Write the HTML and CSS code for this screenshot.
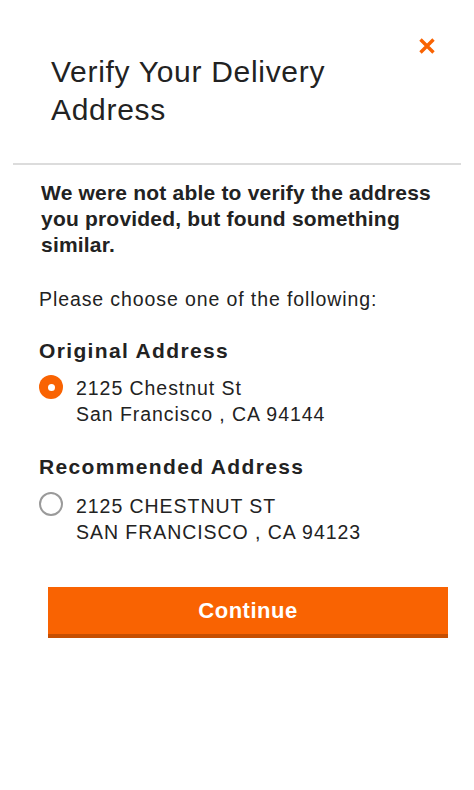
FILE: index.html
```html
<!DOCTYPE html>
<html>
<head>
<meta charset="utf-8">
<link rel="stylesheet" href="styles.css">
</head>
<body>
<div class="modal">
  <header class="head">
    <h1 class="title">Verify Your Delivery Address</h1>
    <button class="close" aria-label="Close">
      <svg width="18" height="18" viewBox="0 0 18 18"><path d="M2.5 2.5 L15.5 15.5 M15.5 2.5 L2.5 15.5" stroke="#f96302" stroke-width="3.4" stroke-linecap="butt"/></svg>
    </button>
  </header>
  <div class="divider"></div>
  <section class="content">
    <p class="warn">We were not able to verify the address you provided, but found something similar.</p>
    <p class="choose">Please choose one of the following:</p>
    <h2 class="label">Original Address</h2>
    <div class="option">
      <span class="radio checked"></span>
      <div class="addr">2125 Chestnut St<br>San Francisco , CA 94144</div>
    </div>
    <h2 class="label label-rec">Recommended Address</h2>
    <div class="option option-rec">
      <span class="radio"></span>
      <div class="addr">2125 CHESTNUT ST<br>SAN FRANCISCO , CA 94123</div>
    </div>
    <button class="continue">Continue</button>
  </section>
</div>
</body>
</html>
```
FILE: styles.css
```css
html, body {
  margin: 0;
  padding: 0;
  background: #fff;
}
body {
  font-family: "Liberation Sans", Arial, sans-serif;
  color: #222;
}
.modal {
  width: 474px;
}
.head {
  display: flex;
  justify-content: space-between;
  align-items: flex-start;
  padding: 53px 0 0 51px;
  height: 114px;
  box-sizing: border-box;
}
.title {
  margin: 0;
  font-weight: normal;
  font-size: 30px;
  line-height: 38px;
  letter-spacing: 0.7px;
  width: 320px;
  color: #222;
}
.close {
  border: 0;
  background: none;
  padding: 0;
  margin: -16px 38px 0 0;
  width: 18px;
  height: 18px;
  display: flex;
}
.divider {
  margin: 49px 13px 0 13px;
  height: 2px;
  background: #dcdcdc;
}
.content {
  padding: 15px 0 0 39px;
}
.warn {
  margin: 0 0 0 2px;
  font-weight: bold;
  font-size: 21px;
  line-height: 26px;
  letter-spacing: 0.2px;
  width: 410px;
}
.choose {
  margin: 28px 0 0 0;
  font-size: 19.5px;
  line-height: 26px;
  letter-spacing: 0.9px;
}
.label {
  margin: 26px 0 0 0;
  font-size: 21px;
  line-height: 26px;
  font-weight: bold;
  letter-spacing: 1.35px;
}
.label-rec {
  margin-top: 27px;
}
.option {
  display: flex;
  align-items: flex-start;
  margin-top: 11px;
}
.option-rec {
  margin-top: 12px;
}
.option-rec .addr {
  margin-top: 1px;
}
.radio {
  width: 24px;
  height: 24px;
  box-sizing: border-box;
  border-radius: 50%;
  border: 2px solid #9a9a9a;
  margin: 0 13px 0 0;
  flex: none;
  position: relative;
}
.radio.checked {
  border: 0;
  background: #f96302;
}
.radio.checked::after {
  content: "";
  position: absolute;
  left: 8.5px;
  top: 8.5px;
  width: 7px;
  height: 7px;
  border-radius: 50%;
  background: #fff;
}
.addr {
  font-size: 19.5px;
  line-height: 26px;
  letter-spacing: 0.95px;
  color: #222;
  margin-top: 0;
}
.continue {
  display: block;
  margin: 42px 0 0 9px;
  width: 400px;
  height: 51px;
  border: 0;
  border-bottom: 4px solid #c64f02;
  background: #f96302;
  color: #fff;
  font-family: "Liberation Sans", Arial, sans-serif;
  font-size: 22px;
  font-weight: bold;
  letter-spacing: 0.5px;
  padding: 0;
}
```
